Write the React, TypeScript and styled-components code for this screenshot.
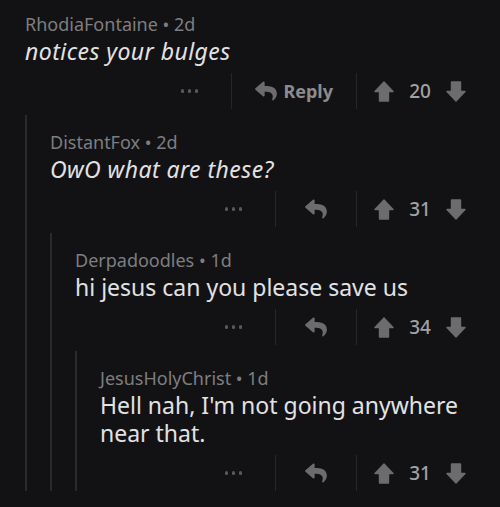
import React from 'react'
import styled, { createGlobalStyle } from 'styled-components'

const GlobalStyle = createGlobalStyle`
  html, body {
    margin: 0;
    padding: 0;
    background: #121214;
  }
  body {
    font-family: 'Noto Sans', 'Open Sans', sans-serif;
    -webkit-font-smoothing: antialiased;
  }
`

const Page = styled.div`
  width: 500px;
  height: 507px;
  overflow: hidden;
  background: #121214;
  box-sizing: border-box;
  padding: 13px 0 0 25px;
`

const CommentBlock = styled.div`
  display: flex;
  flex-direction: column;
`

const Meta = styled.div`
  font-size: 18px;
  line-height: 22px;
  color: #7e7e80;
  white-space: nowrap;
`

const Body = styled.div<{ $italic?: boolean }>`
  margin-top: 2px;
  padding-right: 34px;
  font-size: 23px;
  line-height: 28px;
  color: #e2e2e4;
  font-style: ${({ $italic }) => ($italic ? 'italic' : 'normal')};
  letter-spacing: ${({ $italic }) => ($italic ? '0.45px' : '0')};
`

const Actions = styled.div`
  display: flex;
  justify-content: flex-end;
  align-items: stretch;
  height: 36px;
  margin-top: 8px;
  padding-right: 34px;
`

const Cell = styled.div`
  display: flex;
  align-items: center;
  justify-content: center;
`

const MoreCell = styled(Cell)`
  padding-right: 33px;
`

const ReplyCell = styled(Cell)`
  min-width: 80px;
  padding: 0 23px;
  box-sizing: border-box;
  gap: 6px;
`

const VoteCell = styled(Cell)`
  padding-left: 17px;
  gap: 14px;
`

const Divider = styled.div`
  width: 1px;
  background: #262628;
`

const Dots = styled.div`
  display: flex;
  gap: 3.5px;
  span {
    width: 3.5px;
    height: 3.5px;
    border-radius: 50%;
    background: #5a5a5c;
  }
`

const ReplyLabel = styled.span`
  font-size: 18px;
  font-weight: 700;
  color: #8c8c8e;
  line-height: 1;
`

const Score = styled.span`
  font-size: 19px;
  font-weight: 500;
  color: #a2a2a4;
  line-height: 1;
  min-width: 24px;
  text-align: center;
`

const Replies = styled.div`
  margin-top: 6px;
  border-left: 2px solid #2a2a2c;
  padding: 16px 0 0 23px;
`

const ICON = '#6c6c6e'

function ReplyIcon() {
  return (
    <svg width="22" height="20" viewBox="0 0 512 470" fill={ICON}>
      <path d="M8.3 169.8L184.3 17.9C199.7 4.5 224 15.3 224 36v80c160.6 1.8 288 34 288 186.3 0 61.4-39.6 122.3-83.3 154.1-13.7 9.9-33.1-2.5-28.1-18.6 45.3-145-21.5-183.5-176.6-185.7V340c0 20.7-24.3 31.5-39.7 18.2l-176-152c-11.1-9.6-11.1-26.8 0-36.4z" />
    </svg>
  )
}

function VoteArrow({ down }: { down?: boolean }) {
  return (
    <svg
      width="20"
      height="21"
      viewBox="0 0 20 21"
      style={down ? { transform: 'rotate(180deg)' } : undefined}
    >
      <polygon
        points="10,1 19,10.5 14.5,10.5 14.5,20 5.5,20 5.5,10.5 1,10.5"
        fill={ICON}
        stroke={ICON}
        strokeWidth="1.4"
        strokeLinejoin="round"
      />
    </svg>
  )
}

interface CommentData {
  author: string
  age: string
  text: string
  italic?: boolean
  score: number
  replyLabel?: boolean
  replies?: CommentData[]
}

const thread: CommentData = {
  author: 'RhodiaFontaine',
  age: '2d',
  text: 'notices your bulges',
  italic: true,
  score: 20,
  replyLabel: true,
  replies: [
    {
      author: 'DistantFox',
      age: '2d',
      text: 'OwO what are these?',
      italic: true,
      score: 31,
      replies: [
        {
          author: 'Derpadoodles',
          age: '1d',
          text: 'hi jesus can you please save us',
          score: 34,
          replies: [
            {
              author: 'JesusHolyChrist',
              age: '1d',
              text: "Hell nah, I'm not going anywhere near that.",
              score: 31
            }
          ]
        }
      ]
    }
  ]
}

function Comment({ comment }: { comment: CommentData }) {
  return (
    <CommentBlock>
      <Meta>
        {comment.author} • {comment.age}
      </Meta>
      <Body $italic={comment.italic}>{comment.text}</Body>
      <Actions>
        <MoreCell>
          <Dots>
            <span />
            <span />
            <span />
          </Dots>
        </MoreCell>
        <Divider />
        <ReplyCell>
          <ReplyIcon />
          {comment.replyLabel && <ReplyLabel>Reply</ReplyLabel>}
        </ReplyCell>
        <Divider />
        <VoteCell>
          <VoteArrow />
          <Score>{comment.score}</Score>
          <VoteArrow down />
        </VoteCell>
      </Actions>
      {comment.replies && (
        <Replies>
          {comment.replies.map(r => (
            <Comment key={r.author} comment={r} />
          ))}
        </Replies>
      )}
    </CommentBlock>
  )
}

export default function App() {
  return (
    <>
      <GlobalStyle />
      <Page>
        <Comment comment={thread} />
      </Page>
    </>
  )
}
